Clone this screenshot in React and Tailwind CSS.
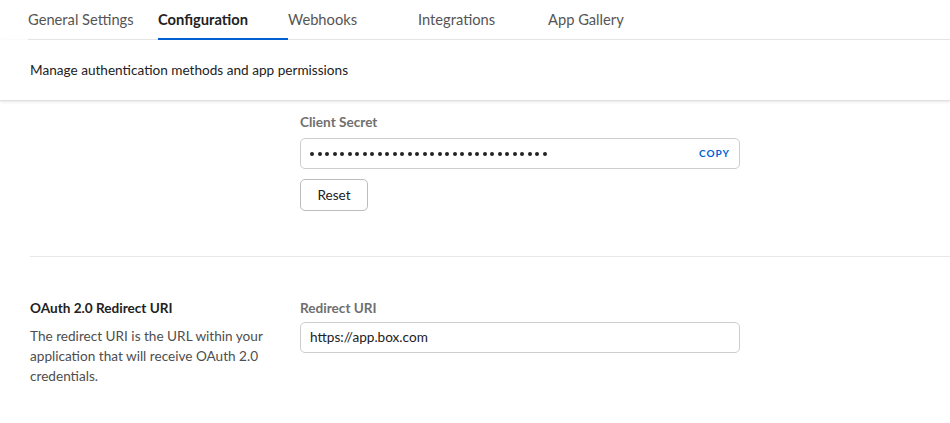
import React from "react"

const tabs = ["General Settings", "Configuration", "Webhooks", "Integrations", "App Gallery"]

function Tabs({ active }) {
  return (
    <div className="ml-[28px] flex h-[40px] border-b border-[#e8e8e8]">
      {tabs.map((t) => (
        <div
          key={t}
          className={`relative w-[130px] pt-[10px] text-[14.7px] leading-[18px] ${
            t === active ? "font-bold text-[#222]" : "text-[#555]"
          }`}
        >
          {t}
          {t === active && <div className="absolute left-0 right-0 bottom-[-1px] h-[2px] bg-[#0061d5]" />}
        </div>
      ))}
    </div>
  )
}

function Dots({ count }) {
  return (
    <div className="flex gap-[3.5px]">
      {Array.from({ length: count }).map((_, i) => (
        <span key={i} className="block h-[4px] w-[4px] rounded-full bg-[#222]" />
      ))}
    </div>
  )
}

export default function App() {
  return (
    <div className="min-h-[423px] w-[950px] overflow-hidden bg-white font-['Lato','Liberation_Sans',sans-serif] text-[#222]">
      <Tabs active="Configuration" />

      <div className="relative z-10 flex h-[61px] items-center border-b border-[#e0e0e0] bg-white pl-[30px] shadow-[0_1px_3px_rgba(0,0,0,0.1)]">
        <p className="text-[13.6px]">Manage authentication methods and app permissions</p>
      </div>

      <div className="flex pl-[30px]">
        <div className="w-[270px]" />
        <div className="pt-[13px]">
          <label className="block text-[13.6px] font-bold leading-[16px] text-[#6f6f6f]">Client Secret</label>
          <div className="mt-[8px] flex h-[31px] w-[440px] items-center justify-between rounded-[5px] border border-[#cdcdcd] pl-[9px] pr-[9px]">
            <Dots count={32} />
            <button className="text-[10px] font-bold tracking-[0.1em] text-[#0061d5]">COPY</button>
          </div>
          <button className="mt-[10px] h-[32px] w-[68px] rounded-[5px] border border-[#bcbcbc] bg-white text-[13.6px] text-[#222]">
            Reset
          </button>
        </div>
      </div>

      <div className="ml-[30px] mt-[45px] border-t border-[#e8e8e8]" />

      <div className="flex pl-[30px] pt-[43px]">
        <div className="w-[270px]">
          <h3 className="text-[13.6px] font-bold leading-[16px] text-[#222]">OAuth 2.0 Redirect URI</h3>
          <p className="mt-[10px] w-[245px] text-[13.6px] leading-[20px] text-[#4e4e4e]">
            The redirect URI is the URL within your application that will receive OAuth 2.0 credentials.
          </p>
        </div>
        <div>
          <label className="block text-[13.6px] font-bold leading-[16px] text-[#6f6f6f]">Redirect URI</label>
          <div className="mt-[6px] flex h-[31px] w-[440px] items-center rounded-[5px] border border-[#cdcdcd] pl-[9px] text-[13.6px] text-[#222]">
            https://app.box.com
          </div>
        </div>
      </div>
    </div>
  )
}
